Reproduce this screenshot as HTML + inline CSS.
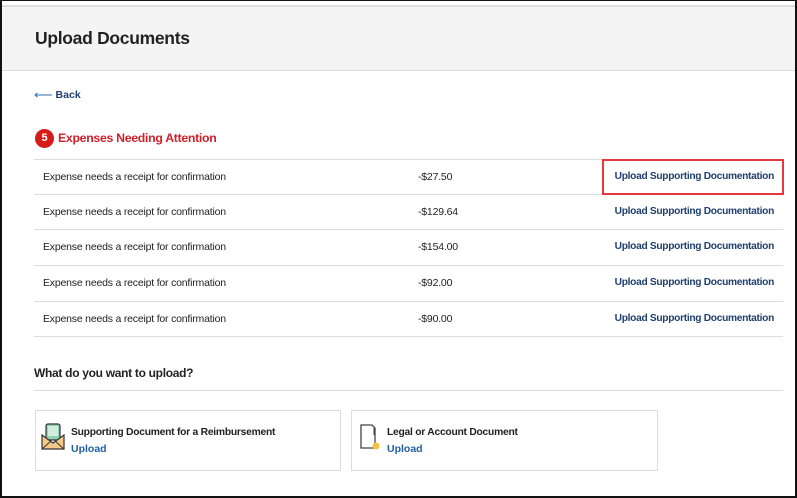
<!DOCTYPE html>
<html><head><meta charset="utf-8"><style>
*{margin:0;padding:0;box-sizing:border-box}
body{width:797px;height:498px;overflow:hidden;background:#fff;font-family:"Liberation Sans",sans-serif;position:relative}
.frame{position:absolute;left:0;top:0;width:797px;height:498px;border:2px solid #111;border-top:1px solid #111}
.hdr{position:absolute;left:2px;top:5px;width:793px;height:66px;background:#f4f4f4;border-top:2px solid #ddd;border-bottom:1px solid #ddd}
.hdr h1{position:absolute;left:33px;top:21px;font-size:17.5px;font-weight:bold;color:#222;letter-spacing:-0.3px}
.back{position:absolute;left:34px;top:86px;font-size:10.5px;font-weight:bold;color:#1f3f6e}
.back span{color:#2a6fb5;font-size:13px;font-weight:normal;position:relative;top:1px}
.badge{position:absolute;left:35px;top:129px;width:19px;height:19px;border-radius:50%;background:#d61a1a;color:#fff;font-size:11px;font-weight:bold;text-align:center;line-height:19px}
.att{position:absolute;left:58px;top:131px;font-size:12.3px;font-weight:bold;color:#d0202a;letter-spacing:-0.3px}
.row{position:absolute;left:34px;width:749px;height:36px;border-top:1px solid #ddd;font-size:10.5px;color:#222;letter-spacing:-0.2px}
.row .d{position:absolute;left:9px;top:11px}
.row .a{position:absolute;left:384px;top:11px}
.row .l{position:absolute;right:9px;top:11px;font-weight:bold;color:#1f3f6e;font-size:10.2px;letter-spacing:-0.3px}
.last{position:absolute;left:34px;top:336px;width:749px;border-top:1px solid #ddd}
.red{position:absolute;left:602px;top:159px;width:182px;height:36px;border:2px solid #e8383d}
.q{position:absolute;left:34px;top:366px;font-size:12px;font-weight:bold;color:#222;letter-spacing:-0.3px}
.qline{position:absolute;left:34px;top:390px;width:749px;border-top:1px solid #ddd}
.card{position:absolute;top:410px;height:61px;border:1px solid #ddd;background:#fff}
.card .t{position:absolute;left:35px;top:16px;font-size:10.3px;font-weight:bold;color:#222;letter-spacing:-0.25px}
.card .u{position:absolute;left:35px;top:32px;font-size:10.5px;font-weight:bold;color:#1f5fa0}
.card svg{position:absolute;left:5px;top:12px}
</style></head><body>
<div class="hdr"><h1>Upload Documents</h1></div>
<div class="back"><span>⟵</span> Back</div>
<div class="badge">5</div>
<div class="att">Expenses Needing Attention</div>
<div class="row" style="top:159px"><div class="d">Expense needs a receipt for confirmation</div><div class="a">-$27.50</div><div class="l">Upload Supporting Documentation</div></div>
<div class="row" style="top:194px"><div class="d">Expense needs a receipt for confirmation</div><div class="a">-$129.64</div><div class="l">Upload Supporting Documentation</div></div>
<div class="row" style="top:229px"><div class="d">Expense needs a receipt for confirmation</div><div class="a">-$154.00</div><div class="l">Upload Supporting Documentation</div></div>
<div class="row" style="top:265px"><div class="d">Expense needs a receipt for confirmation</div><div class="a">-$92.00</div><div class="l">Upload Supporting Documentation</div></div>
<div class="row" style="top:301px"><div class="d">Expense needs a receipt for confirmation</div><div class="a">-$90.00</div><div class="l">Upload Supporting Documentation</div></div>
<div class="last"></div>
<div class="red"></div>
<div class="q">What do you want to upload?</div>
<div class="qline"></div>
<div class="card" style="left:35px;width:306px">
<svg width="24" height="28" viewBox="0 0 24 28"><rect x="5" y="1" width="14" height="16" rx="2" fill="#8fd3b0" stroke="#333" stroke-width="1.2"/><rect x="7" y="3" width="10" height="10" fill="#cfeee0"/><path d="M1 12 L12 20 L23 12 V26 H1 Z" fill="#f3c98a" stroke="#333" stroke-width="1.2"/><path d="M1 26 L10 18 M23 26 L14 18" stroke="#333" stroke-width="1"/></svg>
<div class="t">Supporting Document for a Reimbursement</div><div class="u">Upload</div></div>
<div class="card" style="left:351px;width:307px">
<svg width="26" height="28" viewBox="0 0 26 28"><path d="M4 2 H15 L18 5 V25 H4 Z" fill="none" stroke="#444" stroke-width="1.3"/><line x1="17" y1="5" x2="17" y2="12" stroke="#444"/><circle cx="19" cy="23" r="3.5" fill="#f3c340"/></svg>
<div class="t">Legal or Account Document</div><div class="u">Upload</div></div>
<div class="frame"></div>
</body></html>
